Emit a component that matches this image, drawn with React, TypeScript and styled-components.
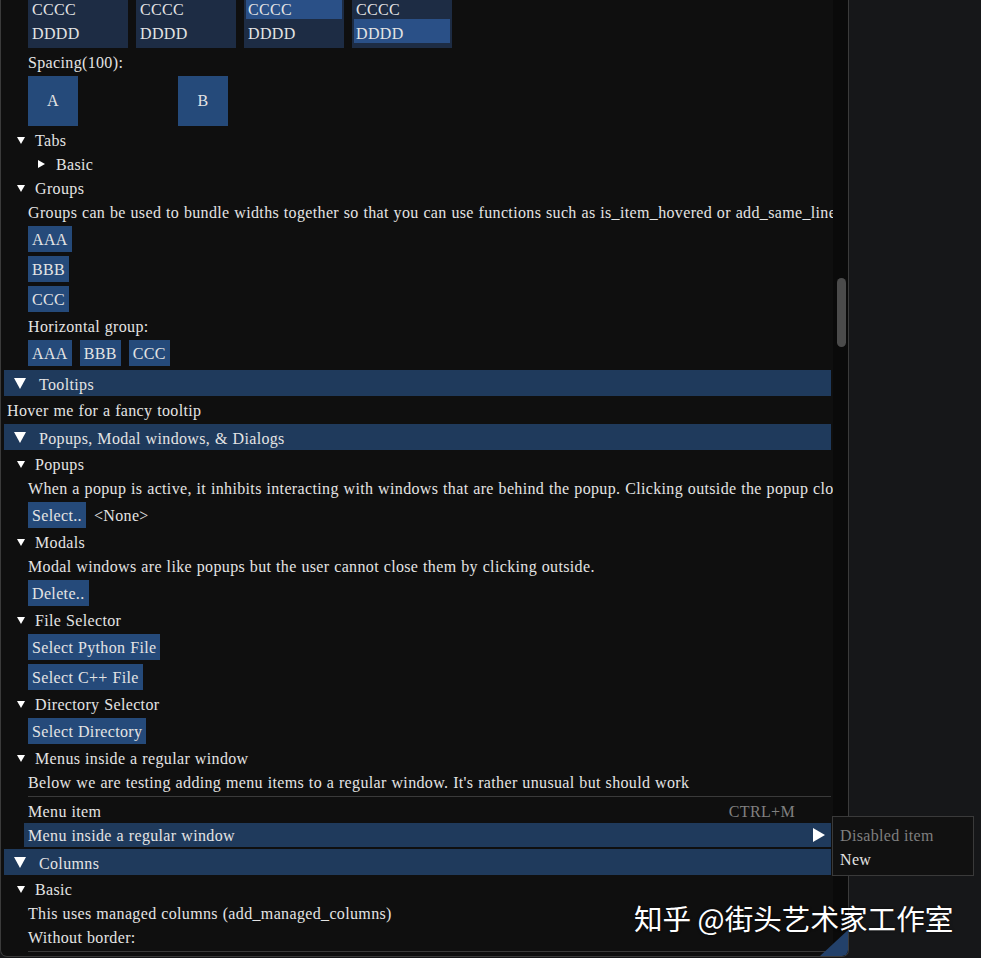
import React from "react"
import styled, { createGlobalStyle } from "styled-components"

const GlobalStyle = createGlobalStyle`
  html, body {
    margin: 0;
    padding: 0;
    background: #161719;
  }
  body {
    font-family: "Liberation Serif", "Times New Roman", serif;
    color: #e4e4e4;
  }
`

const Screen = styled.div`
  position: relative;
  width: 981px;
  height: 958px;
  overflow: hidden;
  background: #161719;
`

const Window = styled.div`
  position: relative;
  display: flex;
  width: 849px;
  height: 957px;
  box-sizing: border-box;
  background: #0f0f0f;
  border: 1px solid #3b3b3b;
  border-top: none;
  border-radius: 0 0 7px 7px;
  overflow: hidden;
`

const Content = styled.div`
  flex: 1;
  padding: 0 2px 0 6px;
  overflow: hidden;
  font-size: 16px;
  letter-spacing: 0.35px;
  word-spacing: 0.4px;
`

// content is scrolled, so the first items sit above the window top
const Scrolled = styled.div`
  display: flex;
  flex-direction: column;
  gap: 4px;
  margin-top: -58px;
`

const Column = styled.div`
  display: flex;
  flex-direction: column;
  gap: 4px;
`

const Indent = styled(Column)`
  padding-left: 21px;
`

const Text = styled.div<{ $dim?: boolean }>`
  height: 20px;
  line-height: 22px;
  white-space: nowrap;
  color: ${(p) => (p.$dim ? "#7f7f7f" : "inherit")};
`

const Track = styled.div`
  width: 15px;
  box-sizing: border-box;
  padding: 278px 0 0 4px;
  background: #0a0a0a;
`

const Thumb = styled.div`
  width: 9px;
  height: 69px;
  border-radius: 5px;
  background: #4b4b4b;
`

const Grip = styled.svg`
  position: absolute;
  right: 0;
  bottom: 0;
`

const BoxRow = styled.div`
  display: flex;
  gap: 8px;
`

const ChildBox = styled.div`
  width: 100px;
  padding: 5px 2px;
  box-sizing: border-box;
  background: #1d2c44;
`

const BoxItem = styled.div<{ $selected?: boolean }>`
  height: 24px;
  line-height: 29px;
  padding-left: 2px;
  background: ${(p) => (p.$selected ? "#2a5087" : "transparent")};
`

const Row = styled.div<{ $gap?: number }>`
  display: flex;
  align-items: center;
  gap: ${(p) => p.$gap ?? 8}px;
`

const Button = styled.button<{ $size?: number }>`
  height: ${(p) => p.$size ?? 26}px;
  width: ${(p) => (p.$size ? `${p.$size}px` : "auto")};
  padding: 0 4px;
  border: none;
  background: #254a7a;
  color: inherit;
  font: inherit;
  letter-spacing: inherit;
  word-spacing: inherit;
  line-height: 28px;
  align-self: flex-start;
  white-space: nowrap;
`

const TreeRow = styled.div`
  display: flex;
  align-items: center;
  height: 20px;
  padding-left: 10px;
`

const ArrowBox = styled.span`
  display: flex;
  width: 18px;
`

const TreeLabel = styled.span`
  padding-top: 2px;
  line-height: 22px;
`

const HeaderBar = styled.div`
  display: flex;
  align-items: center;
  height: 26px;
  margin-left: -3px;
  padding-left: 10px;
  background: #1f3a5c;
`

const HeaderLabel = styled.span`
  margin-left: 13px;
  padding-top: 3px;
  line-height: 26px;
`

const Separator = styled.div`
  height: 1px;
  background: #3a3a3a;
`

const MenuBlock = styled.div`
  display: flex;
  flex-direction: column;
  margin: -2px 0 -2px -4px;
`

const MenuRow = styled.div<{ $active?: boolean }>`
  display: flex;
  align-items: center;
  box-sizing: border-box;
  height: 24px;
  padding: 2px 0 0 4px;
  line-height: 24px;
  background: ${(p) => (p.$active ? "#1f3a5c" : "transparent")};
`

const Shortcut = styled.span`
  margin-left: auto;
  margin-right: 36px;
  color: #808080;
`

const SubArrow = styled.svg`
  margin: -2px 6px 0 auto;
`

const Popup = styled.div`
  position: absolute;
  left: 832px;
  top: 816px;
  width: 142px;
  height: 60px;
  box-sizing: border-box;
  padding: 8px 7px;
  display: flex;
  flex-direction: column;
  gap: 4px;
  background: #111111;
  border: 1px solid #3a3a3a;
  font-size: 16px;
  letter-spacing: 0.35px;
`

const Watermark = styled.div`
  position: absolute;
  left: 634px;
  top: 897px;
  font-family: "Noto Sans CJK SC", "Noto Sans", sans-serif;
  font-size: 28.6px;
  color: #ffffff;
  text-shadow: 0 0 3px rgba(0, 0, 0, 0.6);
  white-space: nowrap;
`

const DownArrow = ({ big }: { big?: boolean }) =>
  big ? (
    <svg width="12" height="11" viewBox="0 0 12 11">
      <polygon points="0,0 12,0 6,11" fill="#ffffff" />
    </svg>
  ) : (
    <svg width="8" height="7" viewBox="0 0 8 7">
      <polygon points="0,0 8,0 4,7" fill="#ffffff" />
    </svg>
  )

const RightArrow = () => (
  <svg width="7" height="8" viewBox="0 0 7 8">
    <polygon points="0,0 7,4 0,8" fill="#ffffff" />
  </svg>
)

function TreeNode({ label, open = true, children }: { label: string; open?: boolean; children?: React.ReactNode }) {
  return (
    <Column>
      <TreeRow>
        <ArrowBox>{open ? <DownArrow /> : <RightArrow />}</ArrowBox>
        <TreeLabel>{label}</TreeLabel>
      </TreeRow>
      {open && children && <Indent>{children}</Indent>}
    </Column>
  )
}

function Header({ label, children }: { label: string; children?: React.ReactNode }) {
  return (
    <Column>
      <HeaderBar>
        <DownArrow big />
        <HeaderLabel>{label}</HeaderLabel>
      </HeaderBar>
      {children}
    </Column>
  )
}

const boxes = [
  { selected: "AAAA" },
  { selected: "BBBB" },
  { selected: "CCCC" },
  { selected: "DDDD" },
]

export default function App() {
  return (
    <Screen>
      <GlobalStyle />
      <Window>
        <Content>
          <Scrolled>
            <Indent>
              <BoxRow>
                {boxes.map((b, i) => (
                  <ChildBox key={i}>
                    {["AAAA", "BBBB", "CCCC", "DDDD"].map((t) => (
                      <BoxItem key={t} $selected={i > 1 && b.selected === t}>
                        {t}
                      </BoxItem>
                    ))}
                  </ChildBox>
                ))}
              </BoxRow>
              <Text>Spacing(100):</Text>
              <Row $gap={100}>
                <Button $size={50}>A</Button>
                <Button $size={50}>B</Button>
              </Row>
            </Indent>

            <Column>
              <TreeNode label="Tabs">
                <TreeNode label="Basic" open={false} />
              </TreeNode>
              <TreeNode label="Groups">
                <Text>
                  Groups can be used to bundle widths together so that you can use functions such as is_item_hovered or
                  add_same_line on the whole group.
                </Text>
                <Button>AAA</Button>
                <Button>BBB</Button>
                <Button>CCC</Button>
                <Text>Horizontal group:</Text>
                <Row>
                  <Button>AAA</Button>
                  <Button>BBB</Button>
                  <Button>CCC</Button>
                </Row>
              </TreeNode>
            </Column>

            <Header label="Tooltips">
              <Text>Hover me for a fancy tooltip</Text>
            </Header>

            <Header label="Popups, Modal windows, & Dialogs">
              <TreeNode label="Popups">
                <Text>
                  When a popup is active, it inhibits interacting with windows that are behind the popup. Clicking
                  outside the popup closes it.
                </Text>
                <Row>
                  <Button>Select..</Button>
                  <Text>&lt;None&gt;</Text>
                </Row>
              </TreeNode>
              <TreeNode label="Modals">
                <Text>Modal windows are like popups but the user cannot close them by clicking outside.</Text>
                <Button>Delete..</Button>
              </TreeNode>
              <TreeNode label="File Selector">
                <Button>Select Python File</Button>
                <Button>Select C++ File</Button>
              </TreeNode>
              <TreeNode label="Directory Selector">
                <Button>Select Directory</Button>
              </TreeNode>
              <TreeNode label="Menus inside a regular window">
                <Text>
                  Below we are testing adding menu items to a regular window. It's rather unusual but should work
                </Text>
                <Separator />
                <MenuBlock>
                  <MenuRow>
                    Menu item
                    <Shortcut>CTRL+M</Shortcut>
                  </MenuRow>
                  <MenuRow $active>
                    Menu inside a regular window
                    <SubArrow width="12" height="14" viewBox="0 0 12 14">
                      <polygon points="0,0 12,7 0,14" fill="#ffffff" />
                    </SubArrow>
                  </MenuRow>
                </MenuBlock>
              </TreeNode>
            </Header>

            <Header label="Columns">
              <TreeNode label="Basic">
                <Text>This uses managed columns (add_managed_columns)</Text>
                <Text>Without border:</Text>
                <Separator />
              </TreeNode>
            </Header>
          </Scrolled>
        </Content>
        <Track>
          <Thumb />
        </Track>
        <Grip width="28" height="26" viewBox="0 0 28 26">
          <polygon points="28,0 28,26 0,26" fill="#23416a" />
        </Grip>
      </Window>

      <Popup>
        <Text $dim>Disabled item</Text>
        <Text>New</Text>
      </Popup>

      <Watermark>知乎 @街头艺术家工作室</Watermark>
    </Screen>
  )
}
